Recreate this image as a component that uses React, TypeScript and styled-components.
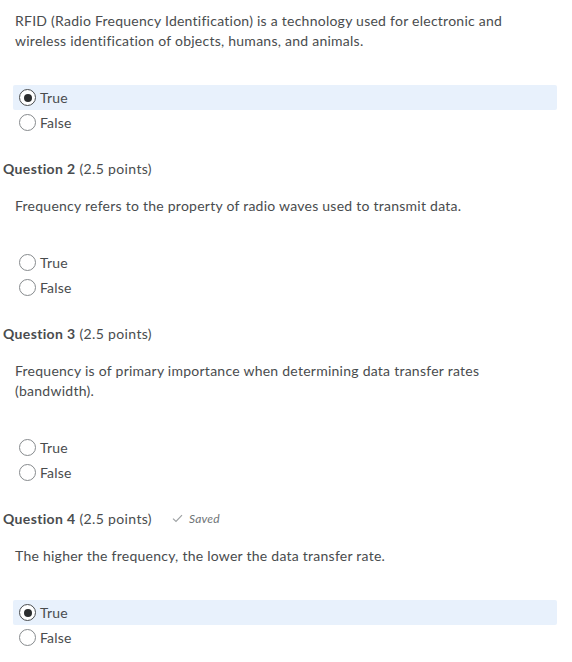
import { FC } from 'react'
import styled, { createGlobalStyle } from 'styled-components'

interface Question {
  number?: number
  points?: string
  saved?: boolean
  text: string
  selected?: 'True' | 'False'
}

const questions: Question[] = [
  {
    text: 'RFID (Radio Frequency Identification) is a technology used for electronic and wireless identification of objects, humans, and animals.',
    selected: 'True'
  },
  {
    number: 2,
    points: '2.5 points',
    text: 'Frequency refers to the property of radio waves used to transmit data.'
  },
  {
    number: 3,
    points: '2.5 points',
    text: 'Frequency is of primary importance when determining data transfer rates (bandwidth).'
  },
  {
    number: 4,
    points: '2.5 points',
    saved: true,
    text: 'The higher the frequency, the lower the data transfer rate.',
    selected: 'True'
  }
]

const GlobalStyle = createGlobalStyle`
  body {
    margin: 0;
    background: #ffffff;
    font-family: Lato, 'Open Sans', sans-serif;
    font-variant-ligatures: none;
    color: #494c4e;
  }
`

const App: FC = () => {
  return (
    <>
      <GlobalStyle />
      <Page>
        {questions.map((q, i) => (
          <QuestionBlock key={i}>
            {q.number && (
              <Header>
                <Title>Question {q.number}</Title>
                <Points>({q.points})</Points>
                {q.saved && (
                  <Saved>
                    <svg width="11" height="9" viewBox="0 0 11 9">
                      <path d="M1 4.6 L4 7.4 L10 1.2" fill="none" stroke="#9ea2a4" strokeWidth="1.2" />
                    </svg>
                    Saved
                  </Saved>
                )}
              </Header>
            )}
            <Body>{q.text}</Body>
            <Options>
              {(['True', 'False'] as const).map((opt) => (
                <Option key={opt} selected={q.selected === opt}>
                  <Radio checked={q.selected === opt} />
                  <span>{opt}</span>
                </Option>
              ))}
            </Options>
          </QuestionBlock>
        ))}
      </Page>
    </>
  )
}

const Page = styled.div`
  width: 572px;
  padding: 11px 0 0 3px;
  box-sizing: border-box;
  display: flex;
  flex-direction: column;
  gap: 23px;
`

const QuestionBlock = styled.div`
  display: flex;
  flex-direction: column;
`

const Header = styled.div`
  display: flex;
  align-items: center;
  height: 20px;
  margin-bottom: 18px;
  font-size: 14px;
  letter-spacing: 0.35px;
  color: #494c4e;
`

const Title = styled.span`
  font-weight: 700;
  margin-right: 4px;
`

const Points = styled.span`
  font-weight: 400;
`

const Saved = styled.span`
  display: flex;
  align-items: center;
  gap: 6px;
  margin-left: 20px;
  font-size: 12px;
  font-style: italic;
  letter-spacing: 0.2px;
  color: #6e7376;
`

const Body = styled.div`
  padding-left: 12px;
  padding-right: 50px;
  font-size: 14px;
  letter-spacing: 0.25px;
  line-height: 20px;
  color: #494c4e;
  margin-bottom: 34px;
`

const Options = styled.div`
  display: flex;
  flex-direction: column;
  padding-left: 10px;
  padding-right: 15px;
`

const Option = styled.div<{ selected?: boolean }>`
  display: flex;
  align-items: center;
  height: 25px;
  padding-left: 6px;
  gap: 4px;
  border-radius: 2px;
  font-size: 14px;
  letter-spacing: 0.2px;
  color: #494c4e;
  background: ${(p) => (p.selected ? '#e8f1fc' : 'transparent')};
`

const Radio = styled.span<{ checked?: boolean }>`
  width: 17px;
  height: 17px;
  box-sizing: border-box;
  border-radius: 50%;
  border: ${(p) => (p.checked ? '1.5px solid #494c4e' : '1px solid #868a8d')};
  background: #ffffff;
  display: flex;
  align-items: center;
  justify-content: center;
  &::after {
    content: '';
    width: 8px;
    height: 8px;
    border-radius: 50%;
    background: #2b2d2e;
    display: ${(p) => (p.checked ? 'block' : 'none')};
  }
`

export default App
